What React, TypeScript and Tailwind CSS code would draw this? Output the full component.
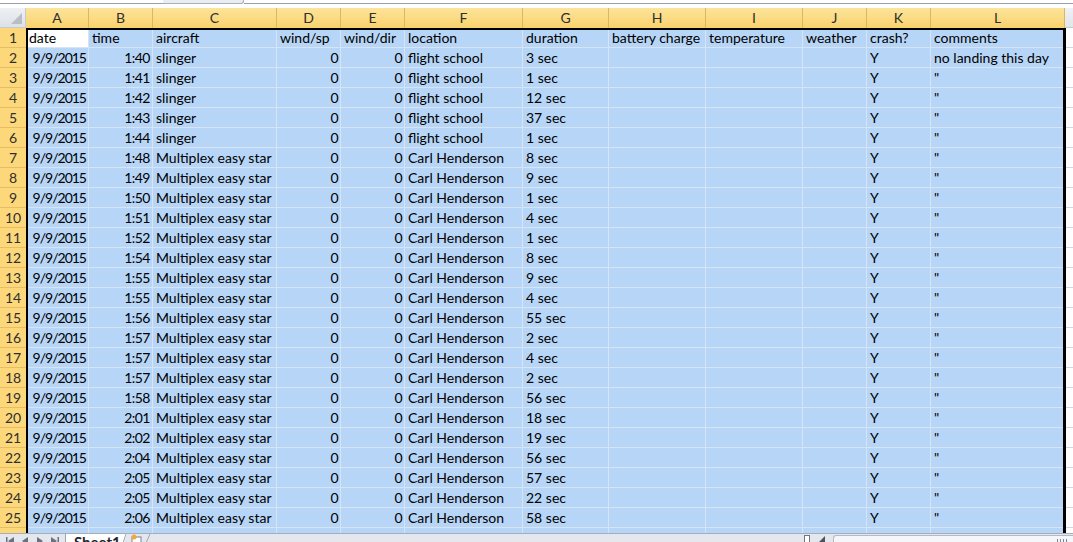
import React from "react"

type Row = [string, string, string, string, string, string, string, string, string, string, string, string]

const cols = [
  { key: "A", w: "w-[63px]" },
  { key: "B", w: "w-[64px]" },
  { key: "C", w: "w-[124px]" },
  { key: "D", w: "w-[64px]" },
  { key: "E", w: "w-[64px]" },
  { key: "F", w: "w-[118px]" },
  { key: "G", w: "w-[86px]" },
  { key: "H", w: "w-[97px]" },
  { key: "I", w: "w-[97px]" },
  { key: "J", w: "w-[64px]" },
  { key: "K", w: "w-[64px]" },
  { key: "L", w: "w-[134px]" },
]

// which columns hold numbers (right aligned)
const rightAligned = [true, true, false, true, true, false, false, false, false, false, false, false]

const flights: [string, string, string, string, string][] = [
  ["1:40", "slinger", "flight school", "3 sec", "no landing this day"],
  ["1:41", "slinger", "flight school", "1 sec", "\""],
  ["1:42", "slinger", "flight school", "12 sec", "\""],
  ["1:43", "slinger", "flight school", "37 sec", "\""],
  ["1:44", "slinger", "flight school", "1 sec", "\""],
  ["1:48", "Multiplex easy star", "Carl Henderson", "8 sec", "\""],
  ["1:49", "Multiplex easy star", "Carl Henderson", "9 sec", "\""],
  ["1:50", "Multiplex easy star", "Carl Henderson", "1 sec", "\""],
  ["1:51", "Multiplex easy star", "Carl Henderson", "4 sec", "\""],
  ["1:52", "Multiplex easy star", "Carl Henderson", "1 sec", "\""],
  ["1:54", "Multiplex easy star", "Carl Henderson", "8 sec", "\""],
  ["1:55", "Multiplex easy star", "Carl Henderson", "9 sec", "\""],
  ["1:55", "Multiplex easy star", "Carl Henderson", "4 sec", "\""],
  ["1:56", "Multiplex easy star", "Carl Henderson", "55 sec", "\""],
  ["1:57", "Multiplex easy star", "Carl Henderson", "2 sec", "\""],
  ["1:57", "Multiplex easy star", "Carl Henderson", "4 sec", "\""],
  ["1:57", "Multiplex easy star", "Carl Henderson", "2 sec", "\""],
  ["1:58", "Multiplex easy star", "Carl Henderson", "56 sec", "\""],
  ["2:01", "Multiplex easy star", "Carl Henderson", "18 sec", "\""],
  ["2:02", "Multiplex easy star", "Carl Henderson", "19 sec", "\""],
  ["2:04", "Multiplex easy star", "Carl Henderson", "56 sec", "\""],
  ["2:05", "Multiplex easy star", "Carl Henderson", "57 sec", "\""],
  ["2:05", "Multiplex easy star", "Carl Henderson", "22 sec", "\""],
  ["2:06", "Multiplex easy star", "Carl Henderson", "58 sec", "\""],
]

const header: Row = [
  "date", "time", "aircraft", "wind/sp", "wind/dir", "location",
  "duration", "battery charge", "temperature", "weather", "crash?", "comments",
]

const rows: Row[] = [
  header,
  ...flights.map(
    ([time, craft, loc, dur, comment]) =>
      ["9/9/2015", time, craft, "0", "0", loc, dur, "", "", "", "Y", comment] as Row
  ),
  ["", "", "", "", "", "", "", "", "", "", "", ""],
]

function ColumnHeader() {
  return (
    <div className="flex h-[20px] shrink-0">
      <div className="relative w-[26px] border-r border-b border-[#c5cad2] bg-linear-to-b from-[#eef0f3] to-[#dde1e7]">
        <svg className="absolute right-[3px] bottom-[3px]" width="11" height="11" viewBox="0 0 11 11">
          <polygon points="11,0 11,11 0,11" fill="#b9bec6" />
        </svg>
      </div>
      {cols.map((c) => (
        <div
          key={c.key}
          className={`${c.w} flex items-center justify-center border-r border-[#deb564] bg-linear-to-b from-[#fde49a] to-[#f9d26c] text-[#2f2f2f] leading-none`}
        >
          {c.key}
        </div>
      ))}
      <div className="flex-1 border-b border-[#c5cad2] bg-linear-to-b from-[#eef1f5] to-[#e1e6ed]" />
    </div>
  )
}

function SheetRow({ cells, index }: { cells: Row; index: number }) {
  return (
    <div className="flex h-[20px] shrink-0">
      <div className="w-[26px] flex items-center justify-center border-b border-[#e7bd68] bg-[#fcd87b] text-[#2f2f2f] leading-none">
        {index}
      </div>
      {cols.map((c, i) => {
        const active = index === 1 && i === 0
        const numeric = rightAligned[i] && index > 1
        return (
          <div
            key={c.key}
            className={`${c.w} flex items-center overflow-visible whitespace-nowrap border-r border-b border-[#d6e4f4] leading-none ${
              active ? "bg-white" : "bg-[#b7d6f7]"
            } ${numeric ? "justify-end pr-[2px]" : "justify-start pl-[3px]"} ${
              numeric && i === 0 ? "tracking-[-1px]" : numeric ? "tracking-[-0.5px]" : ""
            }`}
          >
            <span className="pt-[1px]">{cells[i]}</span>
          </div>
        )
      })}
      <div className="flex-1 border-b border-[#d0d7e5] bg-white" />
    </div>
  )
}

function TabBar() {
  return (
    <div className="flex h-[9px] shrink-0 items-start overflow-hidden border-t border-[#a7aeb8] bg-[#e4e8ee]">
      <div className="flex w-[62px] items-start gap-[5px] pl-[5px] pt-[2px]">
        <svg width="10" height="10" viewBox="0 0 10 10">
          <rect x="1" y="1" width="1.5" height="8" fill="#6a7280" />
          <polygon points="9,1 9,9 3,5" fill="#6a7280" />
        </svg>
        <svg width="10" height="10" viewBox="0 0 10 10">
          <polygon points="8,1 8,9 2,5" fill="#6a7280" />
        </svg>
        <svg width="10" height="10" viewBox="0 0 10 10">
          <polygon points="2,1 2,9 8,5" fill="#6a7280" />
        </svg>
        <svg width="10" height="10" viewBox="0 0 10 10">
          <polygon points="1,1 1,9 7,5" fill="#6a7280" />
          <rect x="7.5" y="1" width="1.5" height="8" fill="#6a7280" />
        </svg>
      </div>
      <div className="ml-[3px] flex h-[20px] w-[62px] items-start border-l border-[#9ea6b2] bg-white pl-[8px] text-[15px] leading-[16px] font-bold text-[#1e2430] [clip-path:polygon(0_0,100%_0,88%_100%,0_100%)]">
        Sheet1
      </div>
      <div className="relative -ml-[4px] h-[20px] w-[28px]">
        <svg width="28" height="20" viewBox="0 0 28 20">
          <line x1="3" y1="0" x2="0" y2="9" stroke="#9ea6b2" />
          <rect x="9" y="3" width="9" height="8" fill="#fff" stroke="#7a8290" />
          <circle cx="11" cy="3" r="2.5" fill="#f2a93a" />
          <line x1="27" y1="0" x2="23" y2="9" stroke="#9ea6b2" />
        </svg>
      </div>
      <div className="flex-1" />
      <div className="mt-[1px] h-[12px] w-[6px] border border-[#6f7785] bg-white" />
      <svg className="ml-[7px] mt-[2px]" width="8" height="8" viewBox="0 0 8 8">
        <polygon points="8,0 8,8 0,8" fill="#4b5260" />
      </svg>
      <div className="ml-[8px] mt-[1px] flex h-[12px] w-[240px] justify-end rounded-tl-[3px] border-t border-l border-[#b3bac4] bg-[#f4f6f9] pr-[6px] pt-[3px]">
        <div className="flex gap-[2px]">
          <div className="h-[5px] w-[1px] bg-[#7d8592]" />
          <div className="h-[5px] w-[1px] bg-[#7d8592]" />
          <div className="h-[5px] w-[1px] bg-[#7d8592]" />
          <div className="h-[5px] w-[1px] bg-[#7d8592]" />
        </div>
      </div>
    </div>
  )
}

export default function App() {
  return (
    <div className="flex h-[542px] w-[1073px] flex-col overflow-hidden bg-white font-['Lato',sans-serif] text-[14px] text-black">
      {/* formula bar remnant */}
      <div className="flex h-[8px] shrink-0">
        <div className="h-[4px] w-[163px] border-b border-[#9aa1ab] bg-white" />
        <div className="h-[4px] w-[81px] rounded-br-[3px] border-b border-r border-[#a9b0ba] bg-[#e9ecf0]" />
        <div className="h-[4px] flex-1 border-b border-[#9aa1ab] bg-white" />
      </div>

      <div className="relative flex flex-1 flex-col overflow-hidden bg-[#f0f2f5]">
        <ColumnHeader />
        {rows.map((r, i) => (
          <SheetRow key={i} cells={r} index={i + 1} />
        ))}
        {/* selection outline */}
        <div className="pointer-events-none absolute left-[26px] top-[20px] h-[540px] w-[1040px] border-l-2 border-t-2 border-r-[3px] border-black" />
      </div>

      <TabBar />
    </div>
  )
}
